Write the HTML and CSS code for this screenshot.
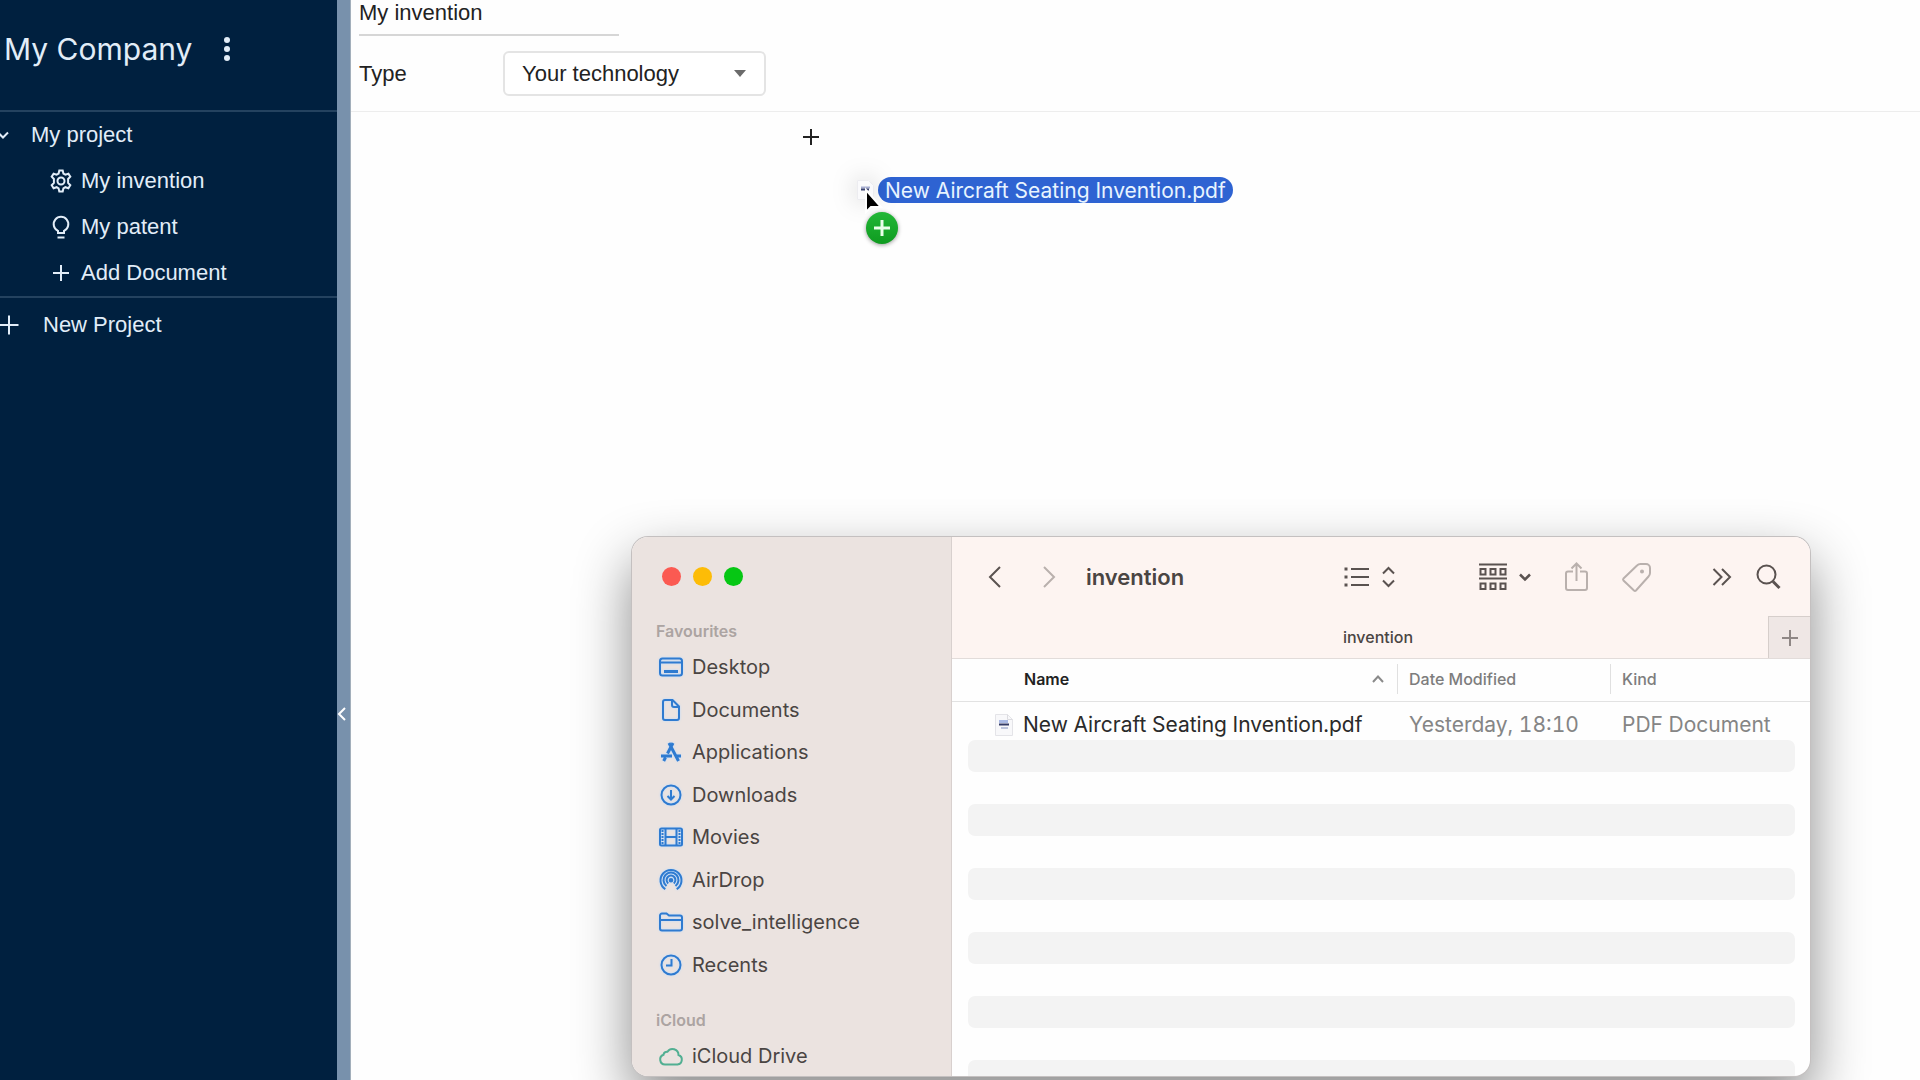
FILE: index.html
```html
<!DOCTYPE html>
<html lang="en">
<head>
<meta charset="utf-8">
<title>My invention</title>
<link rel="stylesheet" href="styles.css">
</head>
<body>
<div class="app">
  <nav class="sidebar">
    <header class="company">
      <h1>My Company</h1>
      <button type="button" class="icon-btn" aria-label="Company menu">
        <svg width="6" height="24" viewBox="0 0 6 24" fill="currentColor"><circle cx="3" cy="3" r="3"/><circle cx="3" cy="12" r="3"/><circle cx="3" cy="21" r="3"/></svg>
      </button>
    </header>
    <section class="project">
      <button type="button" class="row project-row">
        <svg width="14" height="14" viewBox="0 0 14 14" class="line"><path d="M2 4.500l5 5 5-5"/></svg>
        My project
      </button>
      <a href="#invention" class="row doc">
        <svg width="24" height="24" viewBox="0 0 24 24" class="line"><path d="M10.300 1.500h3.400l.7 3 2 1.200 3-1 1.900 3-2.200 2.300v3.900l2.200 2.300-1.900 3-3-1-2 1.200-.7 3h-3.400l-.7-3-2-1.200-3 1-1.900-3 2.200-2.300v-3.900L2.700 7.700l1.900-3 3 1 2-1.200z"/><circle cx="12" cy="12" r="3.500"/></svg>
        My invention
      </a>
      <a href="#patent" class="row doc">
        <svg width="24" height="24" viewBox="0 0 24 24" class="line"><path d="M9 18v-2.200a7.300 7.300 0 1 1 6 0V18zM8.500 22.500h7"/></svg>
        My patent
      </a>
      <button type="button" class="row doc">
        <svg width="24" height="24" viewBox="0 0 24 24" class="line"><path d="M12 4v16M4 12h16"/></svg>
        Add Document
      </button>
    </section>
    <button type="button" class="row new-project">
      <svg width="20" height="20" viewBox="0 0 20 20" class="line"><path d="M9 0.500v19M-.5 10h19"/></svg>
      New Project
    </button>
  </nav>
  <button type="button" class="handle" aria-label="Collapse sidebar">
    <svg width="10" height="16" viewBox="0 0 10 16" class="line"><path d="M8 2L2 8l6 6"/></svg>
  </button>
  <main class="main">
    <form class="details">
      <input class="name" type="text" value="My invention" aria-label="Document name">
      <div class="type">
        <label for="type">Type</label>
        <div class="select">
          <select id="type"><option>Your technology</option></select>
          <svg width="12" height="7" viewBox="0 0 12 7"><path d="M0 0h12L6 7z" fill="#6b6b6b"/></svg>
        </div>
      </div>
    </form>
    <div class="canvas">
      <button type="button" class="icon-btn" aria-label="Add block">
        <svg width="16" height="16" viewBox="0 0 16 16" class="line"><path d="M8 0v16M0 8h16"/></svg>
      </button>
    </div>
  </main>
</div>

<div class="drag">
  <svg class="drag-file" width="17" height="20" viewBox="0 0 17 20"><path d="M.5.500h11l5 5v14H.5z" fill="#fafafc" stroke="#ececf0"/><path d="M4 7.500h9" stroke="#a5acd0" stroke-width="2"/><path d="M4 9.500h8" stroke="#3a4270" stroke-width="2"/></svg>
  <span class="drag-name">New Aircraft Seating Invention.pdf</span>
  <svg class="pointer" width="20" height="28" viewBox="0 0 20 28"><path d="M2 2v22l5-5h10z" fill="#000" stroke="#fff" stroke-width="2"/></svg>
  <svg class="copy-badge" width="32" height="32" viewBox="0 0 32 32"><defs><linearGradient id="g" x1="0" y1="0" x2="0" y2="1"><stop offset="0" stop-color="#22b737"/><stop offset="1" stop-color="#0f9b20"/></linearGradient></defs><circle cx="16" cy="16" r="16" fill="url(#g)"/><path d="M16 8v16M8 16h16" stroke="#eaffea" stroke-width="3"/></svg>
</div>

<section class="finder">
  <aside class="places">
    <div class="lights">
      <button type="button" class="light red" aria-label="Close"></button>
      <button type="button" class="light amber" aria-label="Minimise"></button>
      <button type="button" class="light green" aria-label="Zoom"></button>
    </div>
    <h2>Favourites</h2>
    <ul class="favourites">
      <li><a href="#desktop"><svg width="24" height="24" viewBox="0 0 24 24" class="line"><rect x="1" y="3.500" width="22" height="17" rx="2.500"/><path d="M1 7.500h22"/><path d="M5 16.500h14" stroke-width="3"/></svg>Desktop</a></li>
      <li><a href="#documents"><svg width="24" height="24" viewBox="0 0 24 24" class="line"><path d="M6 2h7.500l6.500 6.500V20a2 2 0 0 1-2 2H6a2 2 0 0 1-2-2V4a2 2 0 0 1 2-2zM13 2v5a2 2 0 0 0 2 2h5"/></svg>Documents</a></li>
      <li><a href="#applications"><svg width="24" height="24" viewBox="0 0 24 24" class="line"><path d="M10 3l9.500 18M14 3L8.500 13.500M6.500 17.500L4.700 21M2 16h11M17.500 16H22" stroke-width="3"/></svg>Applications</a></li>
      <li><a href="#downloads"><svg width="24" height="24" viewBox="0 0 24 24" class="line"><circle cx="12" cy="12" r="9.500"/><path d="M12 7v9.500M8.500 13l3.500 3.500 3.500-3.500"/></svg>Downloads</a></li>
      <li><a href="#movies"><svg width="24" height="24" viewBox="0 0 24 24" class="line"><rect x="1" y="3.500" width="22" height="17" rx="1.500"/><path d="M6.500 3v18M17.500 3v18M6.500 12h11"/><path d="M3.500 5v14M20.500 5v14" stroke-width="2" stroke-dasharray="2 1"/></svg>Movies</a></li>
      <li><a href="#airdrop"><svg width="24" height="24" viewBox="0 0 24 24" class="line"><path d="M6.300 21.200a10.500 10.500 0 1 1 11.400 0M7.500 18a7.500 7.500 0 1 1 9 0M9.200 15.400a4.400 4.400 0 1 1 5.600 0"/><circle cx="12" cy="12.300" r="1.300" fill="currentColor"/></svg>AirDrop</a></li>
      <li><a href="#solve"><svg width="24" height="24" viewBox="0 0 24 24" class="line"><path d="M1 18.500V5.500a2 2 0 0 1 2-2h4.500l2.500 2h11a2 2 0 0 1 2 2v11a2 2 0 0 1-2 2H3a2 2 0 0 1-2-2zM1 10h22"/></svg>solve_intelligence</a></li>
      <li><a href="#recents"><svg width="24" height="24" viewBox="0 0 24 24" class="line"><circle cx="12" cy="12" r="9.500"/><path d="M12.500 6v6.500H7"/></svg>Recents</a></li>
    </ul>
    <h2>iCloud</h2>
    <ul class="cloud">
      <li><a href="#icloud"><svg width="24" height="24" viewBox="0 0 24 24" class="line"><path d="M6 20.500a5 5 0 0 1-1.500-9.700 3.500 3.500 0 0 1 4-3.100A6 6 0 0 1 19.500 11 4.900 4.900 0 0 1 18.500 20.500z"/></svg>iCloud Drive</a></li>
    </ul>
  </aside>
  <div class="browser">
    <header class="toolbar">
      <div class="nav">
        <button type="button" class="icon-btn" aria-label="Back"><svg width="13" height="22" viewBox="0 0 13 22" class="line"><path d="M12 1L2 11l10 10"/></svg></button>
        <button type="button" class="icon-btn faded" aria-label="Forward"><svg width="13" height="22" viewBox="0 0 13 22" class="line"><path d="M1 1l10 10L1 21"/></svg></button>
      </div>
      <h2 class="folder">invention</h2>
      <button type="button" class="icon-btn view" aria-label="View as list">
        <svg width="26" height="20" viewBox="0 0 26 20" class="line"><path d="M7 2h18M7 10h18M7 18h18"/><path d="M0.500 2h3M.5 10h3M.5 18h3" stroke-width="3"/></svg>
        <svg width="13" height="22" viewBox="0 0 13 22" class="line"><path d="M1 7.500l5.500-5.500L12 7.500M1 14.500L6.500 20l5.500-5.500"/></svg>
      </button>
      <button type="button" class="icon-btn group" aria-label="Group items">
        <svg width="28" height="28" viewBox="0 0 28 28" class="line"><path d="M0 1.500h28M0 15.500h28"/><path d="M1.500 6h5v5.500h-5zM11.500 6h5v5.500h-5zM21.500 6h5v5.500h-5zM1.500 20.500h5V26h-5zM11.500 20.500h5V26h-5zM21.500 20.500h5V26h-5z"/></svg>
        <svg width="12" height="8" viewBox="0 0 12 8" class="line"><path d="M1 1.500l5 5 5-5" stroke-width="2.500"/></svg>
      </button>
      <div class="actions">
        <button type="button" class="icon-btn" aria-label="Share"><svg width="23" height="30" viewBox="0 0 23 30" class="line"><path d="M8 9.500H3a2 2 0 0 0-2 2V26a2 2 0 0 0 2 2h17a2 2 0 0 0 2-2V11.500a2 2 0 0 0-2-2h-5M11.500 19V2M6.500 6.500l5-5 5 5"/></svg></button>
        <button type="button" class="icon-btn" aria-label="Edit tags"><svg width="29" height="30" viewBox="0 0 29 30" class="line"><path d="M1.500 16.500L15 3.500A5 5 0 0 1 18.500 2H24a4 4 0 0 1 4 4v5a5 5 0 0 1-1.500 3.500L14 28.500a1.500 1.500 0 0 1-2 0L1.500 18.500a1.500 1.500 0 0 1 0-2z"/><circle cx="20" cy="9.500" r="1" fill="currentColor"/></svg></button>
      </div>
      <div class="more">
        <button type="button" class="icon-btn" aria-label="More"><svg width="19" height="18" viewBox="0 0 19 18" class="line"><path d="M1.500 1l8 8-8 8M10 1l8 8-8 8"/></svg></button>
        <button type="button" class="icon-btn" aria-label="Search"><svg width="25" height="26" viewBox="0 0 25 26" class="line"><circle cx="10.500" cy="10.500" r="9"/><path d="M17 17.500l6.500 6.500" stroke-width="3"/></svg></button>
      </div>
    </header>
    <div class="tabs">
      <span class="tab">invention</span>
      <button type="button" class="new-tab" aria-label="New tab"><svg width="16" height="16" viewBox="0 0 16 16" class="line"><path d="M8 0v16M0 8h16"/></svg></button>
    </div>
    <table class="files">
      <thead>
        <tr>
          <th class="col-name"><div class="cell"><span>Name</span><svg width="12" height="8" viewBox="0 0 12 8" class="line"><path d="M1 7l5-5.500L11 7"/></svg></div></th>
          <th class="col-date"><div class="cell">Date Modified</div></th>
          <th class="col-kind"><div class="cell">Kind</div></th>
        </tr>
      </thead>
      <tbody>
        <tr>
          <td><div class="file"><svg width="18" height="22" viewBox="0 0 18 22"><path d="M.5.500h12l5 5v16H.5z" fill="#f8f8fa" stroke="#e4e4e8"/><path d="M12.500.500v5h5" fill="none" stroke="#dcdce0"/><path d="M4 7.500h9" stroke="#a9b9e4" stroke-width="3"/><path d="M4 10.500h10" stroke="#343b66" stroke-width="2"/><path d="M6 14h7" stroke="#bcc4dc" stroke-width="2"/></svg>New Aircraft Seating Invention.pdf</div></td>
          <td>Yesterday, 18:10</td>
          <td>PDF Document</td>
        </tr>
      </tbody>
    </table>
    <div class="stripes"><i></i><i></i><i></i><i></i><i></i><i></i></div>
  </div>
</section>
</body>
</html>
```
FILE: styles.css
```css
* { box-sizing: border-box; }

body {
  margin: 0;
  background: #fefefe;
  color: #222;
  font: 22px/26px "Liberation Sans", Arial, sans-serif;
}

button, input, select { font: inherit; color: inherit; }

button {
  margin: 0;
  padding: 0;
  border: 0;
  background: none;
  text-align: left;
}

h1, h2, ul { margin: 0; padding: 0; font-weight: 400; }
ul { list-style: none; }
a { color: inherit; text-decoration: none; }
svg { display: block; flex: none; overflow: visible; }
.line { fill: none; stroke: currentColor; stroke-width: 2; }
.icon-btn { display: flex; align-items: center; }

/* Application */
.app { display: flex; height: 100vh; overflow: hidden; }

.sidebar {
  flex: none;
  width: 337px;
  background: #00203f;
  color: #e2edf8;
  overflow: hidden;
}

.company {
  display: flex;
  align-items: center;
  gap: 32px;
  height: 112px;
  padding: 0 0 12px 4px;
  border-bottom: 2px solid #24425f;
}

.company h1 { font: 30px/36px Inter, "Liberation Sans", sans-serif; }
.project { border-bottom: 2px solid #24425f; }

.row {
  display: flex;
  align-items: center;
  width: 100%;
  height: 46px;
}

.project-row { gap: 21px; margin-left: -4px; }
.doc { gap: 8px; padding-left: 49px; }
.new-project { gap: 23px; height: 54px; }

.handle {
  display: flex;
  flex: none;
  align-items: center;
  width: 14px;
  padding-top: 348px;
  border-right: 1px solid #a3afbb;
  background: #7891ac;
  color: #fff;
}

.main { flex: 1; }
.details { height: 112px; border-bottom: 1px solid #ededed; }

.name {
  display: block;
  width: 260px;
  height: 36px;
  margin-left: 8px;
  padding: 0 0 8px;
  border: 0;
  border-bottom: 2px solid #d6d6d6;
  background: none;
}

.type {
  display: flex;
  align-items: center;
  padding: 15px 8px;
}

.type label { width: 144px; }
.select { display: grid; align-items: center; width: 263px; }
.select > * { grid-area: 1 / 1; }

.select select {
  appearance: none;
  height: 45px;
  padding: 0 17px;
  border: 2px solid #e4e4e4;
  border-radius: 6px;
  background: #fff;
}

.select svg { justify-self: end; margin-right: 20px; pointer-events: none; }
.canvas { padding: 17px 0 0 452px; }

/* Dragged file */
.drag {
  position: absolute;
  top: 177px;
  left: 857px;
  display: flex;
  align-items: center;
  gap: 4px;
}

.drag-file { filter: drop-shadow(0 0 12px #0003); }

.drag-name {
  padding: 1px 7px 0;
  border-radius: 13px;
  background: #2e63d2;
  color: #e8f4ff;
  font: 21px/25px Inter, "Liberation Sans", sans-serif;
}

.pointer { position: absolute; top: 11px; left: 7px; }

.copy-badge {
  position: absolute;
  top: 35px;
  left: 9px;
  filter: drop-shadow(0 1px 2px #0006);
}

/* File manager window */
.finder {
  position: absolute;
  top: 537px;
  right: 110px;
  bottom: 4px;
  left: 632px;
  display: flex;
  overflow: hidden;
  border-radius: 16px;
  background: #fefefe;
  box-shadow: 0 0 0 1px #c4c0c0, 0 24px 56px #0007;
  color: #4a4543;
  font: 20px/26px Inter, "Liberation Sans", sans-serif;
}

.places {
  flex: none;
  width: 320px;
  padding: 30px 0 0 24px;
  border-right: 1px solid #d8d0ce;
  background: #ebe3e0;
}

.lights { display: flex; gap: 12px; margin: 0 0 33px 6px; }
.light { width: 19px; height: 19px; border-radius: 50%; }
.red { background: #fb5a52; }
.amber { background: #fdbc07; }
.green { background: #06c714; }

.places h2 {
  color: #aca4a2;
  font-size: 16px;
  font-weight: 600;
  line-height: 24px;
}

.favourites {
  display: grid;
  grid-auto-rows: 1fr;
  height: 340px;
  margin: 3px 0 22px;
}

.places a { display: flex; align-items: center; gap: 9px; height: 100%; padding-left: 3px; }
.places svg { color: #2f7bd0; filter: drop-shadow(0 0 1px #bcdcff); }
.cloud { padding-top: 11px; }
.places .cloud svg { color: #52af92; filter: none; }

.browser { flex: 1; min-width: 0; }

.toolbar {
  display: flex;
  align-items: center;
  height: 79px;
  padding: 0 29px 0 36px;
  background: #fdf4f1;
  color: #5a5250;
}

.nav { display: flex; gap: 42px; }
.faded, .actions { color: #b9b0ad; }
.folder { margin: 0 auto 0 30px; color: #4a4543; font-size: 22px; font-weight: 600; }
.view { gap: 12px; margin-right: 84px; }
.group { gap: 12px; margin-right: 34px; }
.actions { display: flex; gap: 34px; margin-right: 61px; }
.more { display: flex; align-items: center; gap: 25px; }

.tabs {
  display: flex;
  height: 43px;
  border-bottom: 1px solid #e2dcda;
  background: #fdf4f1;
  font-size: 16px;
  font-weight: 500;
}

.tab { flex: 1; padding: 8px 0 0 36px; text-align: center; }

.new-tab {
  display: grid;
  place-items: center;
  width: 42px;
  border: solid #d6cecb;
  border-width: 1px 0 0 1px;
  background: #efe7e5;
  color: #8f8785;
}

.files { width: 100%; border-collapse: collapse; table-layout: fixed; }

.files th {
  height: 42px;
  padding: 0 0 2px;
  border-bottom: 1px solid #e2e2e2;
  color: #7d7d7d;
  font-size: 16px;
  font-weight: 500;
  text-align: left;
}

.cell {
  display: flex;
  align-items: center;
  justify-content: space-between;
  height: 30px;
  padding: 0 13px 0 11px;
}

.cell svg { color: #8a8a8a; }
.col-date { width: 213px; }
.col-kind { width: 200px; }
.col-date .cell, .col-kind .cell { border-left: 1px solid #e0e0e0; }
.files .col-name { color: #222; font-weight: 600; }
.col-name .cell { padding-left: 72px; }

.files td {
  height: 39px;
  padding: 8px 0 0 12px;
  color: #858585;
  font-size: 21px;
  font-variant-numeric: tabular-nums;
  white-space: nowrap;
}

.file { display: flex; align-items: center; gap: 10px; padding-left: 31px; color: #2a2a2a; }

.stripes { padding: 0 15px 0 16px; }
.stripes i { display: block; height: 32px; margin-bottom: 32px; border-radius: 7px; background: #f3f3f3; }
```
